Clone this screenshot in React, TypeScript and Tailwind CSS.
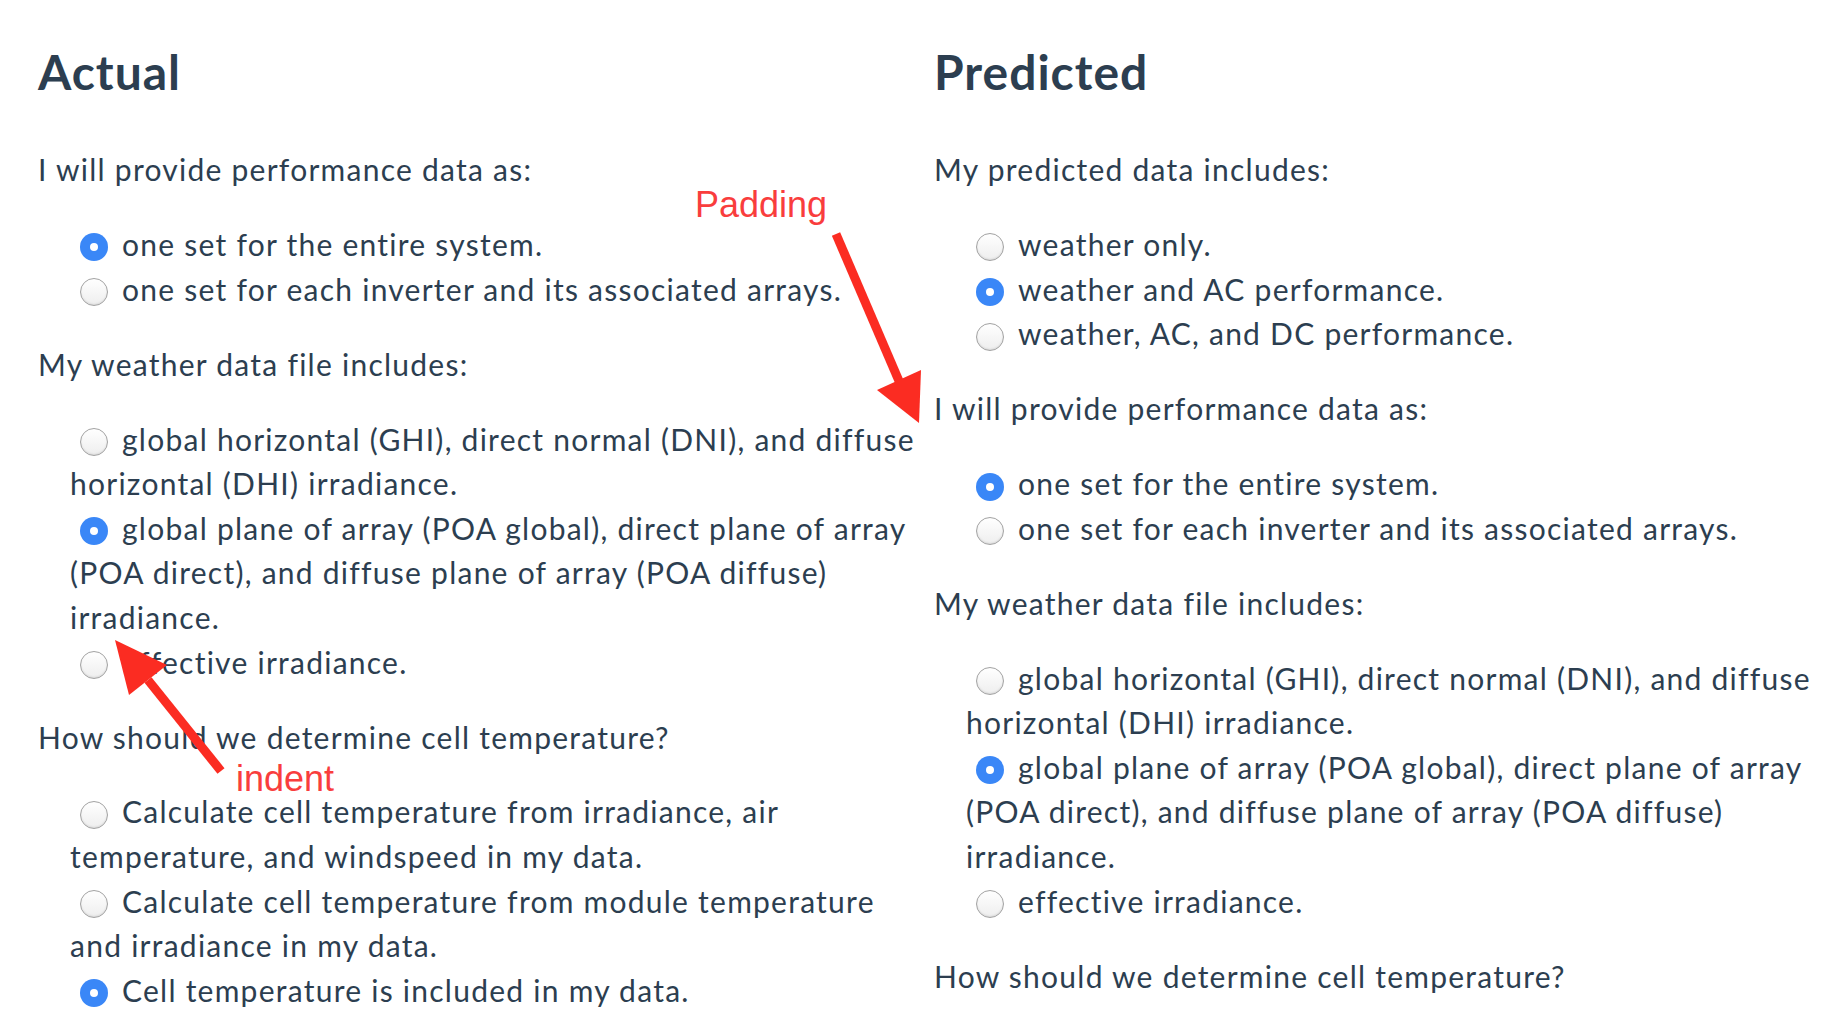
import type { ReactNode } from 'react';

type Option = { label: string; checked?: boolean };
type Question = { prompt: string; options: Option[] };

const actual: Question[] = [
  {
    prompt: 'I will provide performance data as:',
    options: [
      { label: 'one set for the entire system.', checked: true },
      { label: 'one set for each inverter and its associated arrays.' },
    ],
  },
  {
    prompt: 'My weather data file includes:',
    options: [
      { label: 'global horizontal (GHI), direct normal (DNI), and diffuse horizontal (DHI) irradiance.' },
      {
        label:
          'global plane of array (POA global), direct plane of array (POA direct), and diffuse plane of array (POA diffuse) irradiance.',
        checked: true,
      },
      { label: 'effective irradiance.' },
    ],
  },
  {
    prompt: 'How should we determine cell temperature?',
    options: [
      { label: 'Calculate cell temperature from irradiance, air temperature, and windspeed in my data.' },
      { label: 'Calculate cell temperature from module temperature and irradiance in my data.' },
      { label: 'Cell temperature is included in my data.', checked: true },
    ],
  },
];

const predicted: Question[] = [
  {
    prompt: 'My predicted data includes:',
    options: [
      { label: 'weather only.' },
      { label: 'weather and AC performance.', checked: true },
      { label: 'weather, AC, and DC performance.' },
    ],
  },
  actual[0],
  actual[1],
  { prompt: 'How should we determine cell temperature?', options: [] },
];

function Radio({ checked }: { checked?: boolean }) {
  if (checked) {
    return (
      <span className="inline-flex items-center justify-center align-middle w-[28px] h-[28px] rounded-full bg-[#3a87f7] ml-[10px] mr-[14px] relative -top-[1px]">
        <span className="w-[8px] h-[8px] rounded-full bg-white" />
      </span>
    );
  }
  return (
    <span className="inline-block align-middle w-[28px] h-[28px] rounded-full border border-[#a3a3a3] bg-gradient-to-b from-white to-[#eeeeee] shadow-[inset_0_-1px_2px_rgba(0,0,0,0.1)] ml-[10px] mr-[14px] relative -top-[1px]" />
  );
}

function Section({ q }: { q: Question }) {
  return (
    <div>
      <p>{q.prompt}</p>
      {q.options.length > 0 && (
        <ul className="my-[30.4px]">
          {q.options.map((o) => (
            <li key={o.label} className="pl-[32px]">
              <Radio checked={o.checked} />
              {o.label}
            </li>
          ))}
        </ul>
      )}
    </div>
  );
}

function Column({ title, children }: { title: string; children: ReactNode }) {
  return (
    <div className="min-w-0">
      <h2 className="text-[48px] leading-[58px] font-bold tracking-[1px] mb-[46px]">{title}</h2>
      {children}
    </div>
  );
}

export default function App() {
  return (
    <div className="relative w-[1838px] h-[1020px] overflow-hidden bg-white text-[#2c3e50] text-[30px] leading-[44.6px] tracking-[1.25px] font-['Lato',sans-serif]">
      <div className="grid grid-cols-[896px_896px] pl-[38px] pt-[43px]">
        <Column title="Actual">
          {actual.map((q) => (
            <Section key={q.prompt} q={q} />
          ))}
        </Column>
        <Column title="Predicted">
          {predicted.map((q, i) => (
            <Section key={i} q={q} />
          ))}
        </Column>
      </div>

      {/* annotations */}
      <svg className="absolute inset-0 pointer-events-none" width="1838" height="1020" viewBox="0 0 1838 1020">
        <line x1="836" y1="234" x2="899" y2="381" stroke="#fb2c22" strokeWidth="9" />
        <polygon points="877,390 921,370 919,423" fill="#fb2c22" />
        <line x1="221" y1="771" x2="148" y2="680" stroke="#fb2c22" strokeWidth="9" />
        <polygon points="115,640 167,665 129,695" fill="#fb2c22" />
      </svg>
      <div className="absolute left-[695px] top-[187px] text-[36px] leading-none tracking-normal text-[#f93d3d] font-['Liberation_Sans',Arial,sans-serif]">
        Padding
      </div>
      <div className="absolute left-[236px] top-[761px] text-[36px] leading-none tracking-normal text-[#f93d3d] font-['Liberation_Sans',Arial,sans-serif]">
        indent
      </div>
    </div>
  );
}
